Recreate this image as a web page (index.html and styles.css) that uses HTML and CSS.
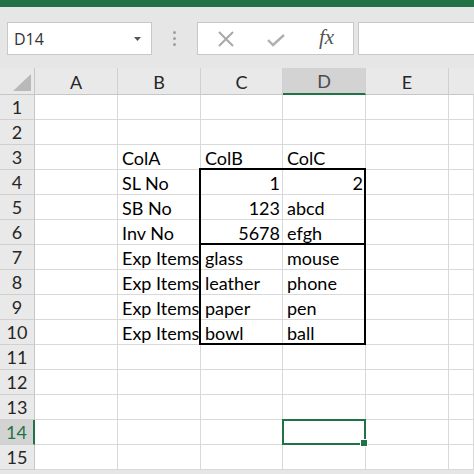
FILE: index.html
```html
<!DOCTYPE html>
<html>
<head>
<meta charset="utf-8">
<link rel="stylesheet" href="styles.css">
</head>
<body>
<div class="app">
  <div class="titlebar"></div>
  <div class="formulabar">
    <div class="namebox">
      <span class="name">D14</span>
      <svg class="dd" width="7" height="4" viewBox="0 0 7 4"><path d="M0 0H7L3.5 4Z" fill="#555"/></svg>
    </div>
    <div class="grip"><i></i><i></i><i></i></div>
    <div class="btns">
      <svg class="ico" width="18" height="18" viewBox="0 0 18 18"><path d="M2 2L16 16M16 2L2 16" stroke="#a8a8a8" stroke-width="2" fill="none"/></svg>
      <svg class="ico" width="20" height="14" viewBox="0 0 20 14"><path d="M2 7L7 12L18 2" stroke="#b0b0b0" stroke-width="2.4" fill="none"/></svg>
      <span class="fx">fx</span>
    </div>
    <div class="input"></div>
  </div>
  <div class="sheet">
    <div class="grid">
      <div class="corner"><svg width="18" height="17" viewBox="0 0 18 17"><path d="M18 0V17H0Z" fill="#b9b9b9"/></svg></div>
      <div class="ch">A</div><div class="ch">B</div><div class="ch">C</div><div class="ch sel">D</div><div class="ch">E</div><div class="ch last"></div>

      <div class="rh">1</div><div class="c"></div><div class="c"></div><div class="c"></div><div class="c"></div><div class="c"></div><div class="c"></div>
      <div class="rh">2</div><div class="c"></div><div class="c"></div><div class="c"></div><div class="c"></div><div class="c"></div><div class="c"></div>
      <div class="rh">3</div><div class="c"></div><div class="c">ColA</div><div class="c">ColB</div><div class="c">ColC</div><div class="c"></div><div class="c"></div>
      <div class="rh">4</div><div class="c"></div><div class="c">SL No</div><div class="c num">1</div><div class="c num">2</div><div class="c"></div><div class="c"></div>
      <div class="rh">5</div><div class="c"></div><div class="c">SB No</div><div class="c num">123</div><div class="c">abcd</div><div class="c"></div><div class="c"></div>
      <div class="rh">6</div><div class="c"></div><div class="c">Inv No</div><div class="c num">5678</div><div class="c">efgh</div><div class="c"></div><div class="c"></div>
      <div class="rh">7</div><div class="c"></div><div class="c">Exp Items</div><div class="c">glass</div><div class="c">mouse</div><div class="c"></div><div class="c"></div>
      <div class="rh">8</div><div class="c"></div><div class="c">Exp Items</div><div class="c">leather</div><div class="c">phone</div><div class="c"></div><div class="c"></div>
      <div class="rh">9</div><div class="c"></div><div class="c">Exp Items</div><div class="c">paper</div><div class="c">pen</div><div class="c"></div><div class="c"></div>
      <div class="rh">10</div><div class="c"></div><div class="c">Exp Items</div><div class="c">bowl</div><div class="c">ball</div><div class="c"></div><div class="c"></div>
      <div class="rh">11</div><div class="c"></div><div class="c"></div><div class="c"></div><div class="c"></div><div class="c"></div><div class="c"></div>
      <div class="rh">12</div><div class="c"></div><div class="c"></div><div class="c"></div><div class="c"></div><div class="c"></div><div class="c"></div>
      <div class="rh">13</div><div class="c"></div><div class="c"></div><div class="c"></div><div class="c"></div><div class="c"></div><div class="c"></div>
      <div class="rh sel">14</div><div class="c"></div><div class="c"></div><div class="c"></div><div class="c"></div><div class="c"></div><div class="c"></div>
      <div class="rh">15</div><div class="c"></div><div class="c"></div><div class="c"></div><div class="c"></div><div class="c"></div><div class="c"></div>
    </div>
    <div class="grid overlay">
      <div class="box box1"></div>
      <div class="box box2"></div>
      <div class="selbox"><span class="handle"></span></div>
    </div>
  </div>
</div>
</body>
</html>
```
FILE: styles.css
```css
* { box-sizing: border-box; }
html, body { margin: 0; padding: 0; }
body { width: 474px; height: 474px; overflow: hidden; background: #e6e6e6; font-family: Lato, "Open Sans", sans-serif; }
.app { display: flex; flex-direction: column; height: 474px; overflow: hidden; }
.titlebar { height: 7px; background: #217346; flex: none; }
.formulabar { height: 61px; flex: none; background: #e6e6e6; display: flex; align-items: flex-start; padding-top: 15px; padding-left: 7px; }
.namebox { width: 145px; height: 33px; background: #fff; border: 1px solid #c8c8c8; display: flex; align-items: center; justify-content: space-between; padding: 0 10px 0 6px; }
.name { font-family: "Open Sans", sans-serif; font-size: 16px; color: #333; }
.dd { margin-top: 1px; }
.grip { width: 45px; height: 33px; display: flex; flex-direction: column; align-items: center; justify-content: center; gap: 3px; }
.grip i { display: block; width: 3px; height: 3px; border-radius: 50%; background: #a0a0a0; }
.btns { width: 157px; height: 33px; background: #fff; border: 1px solid #c8c8c8; display: flex; align-items: center; padding-left: 19px; }
.btns .ico:nth-child(1) { margin-right: 31px; }
.btns .ico:nth-child(2) { margin-right: 33px; margin-top: 2px; }
.fx { font-family: "Liberation Serif", serif; font-style: italic; font-size: 21px; color: #555; margin-top: -3px; }
.input { flex: 1; height: 33px; background: #fff; border: 1px solid #c8c8c8; border-right: none; margin-left: 4px; }

.sheet { position: relative; flex: none; background: #fff; }
.grid { display: grid; grid-template-columns: 35px 83px 83px 82px 83px 83px 25px; grid-template-rows: 27px repeat(15, 25px); }
.overlay { position: absolute; inset: 0; pointer-events: none; }
.corner { background: #e9e9e9; border-right: 1px solid #c6c6c6; border-bottom: 1px solid #c6c6c6; display: flex; align-items: flex-end; justify-content: flex-end; padding: 0 3px 3px 0; }
.ch { background: #e9e9e9; border-right: 1px solid #d0d0d0; border-bottom: 1px solid #c6c6c6; display: flex; align-items: center; justify-content: center; font-size: 18px; color: #262626; padding-top: 1px; }
.ch.last { border-right: none; }
.ch.sel { background: #d3d3d3; border-bottom: 2px solid #217346; color: #4a4a4a; }
.rh { background: #e9e9e9; border-right: 1px solid #c6c6c6; border-bottom: 1px solid #d0d0d0; display: flex; align-items: center; justify-content: center; font-size: 18px; color: #262626; }
.rh.sel { background: #d3d3d3; border-right: 2px solid #217346; color: #217346; }
.c { border-right: 1px solid #d9d9d9; border-bottom: 1px solid #d9d9d9; font-size: 18px; color: #000; white-space: nowrap; display: flex; align-items: flex-end; padding: 0 2px 0 4px; line-height: 22px; }
.c.num { justify-content: flex-end; }

.box { border: 2px solid #000; margin: -2px 0 0 -2px; }
.box1 { grid-column: 4 / 6; grid-row: 5 / 8; }
.box2 { grid-column: 4 / 6; grid-row: 8 / 12; }
.selbox { grid-column: 5 / 6; grid-row: 15 / 16; border: 2px solid #217346; margin: -1px 0 0 -1px; position: relative; }
.handle { position: absolute; right: -4px; bottom: -4px; width: 6px; height: 6px; background: #217346; border: 1px solid #fff; box-sizing: content-box; }
```
